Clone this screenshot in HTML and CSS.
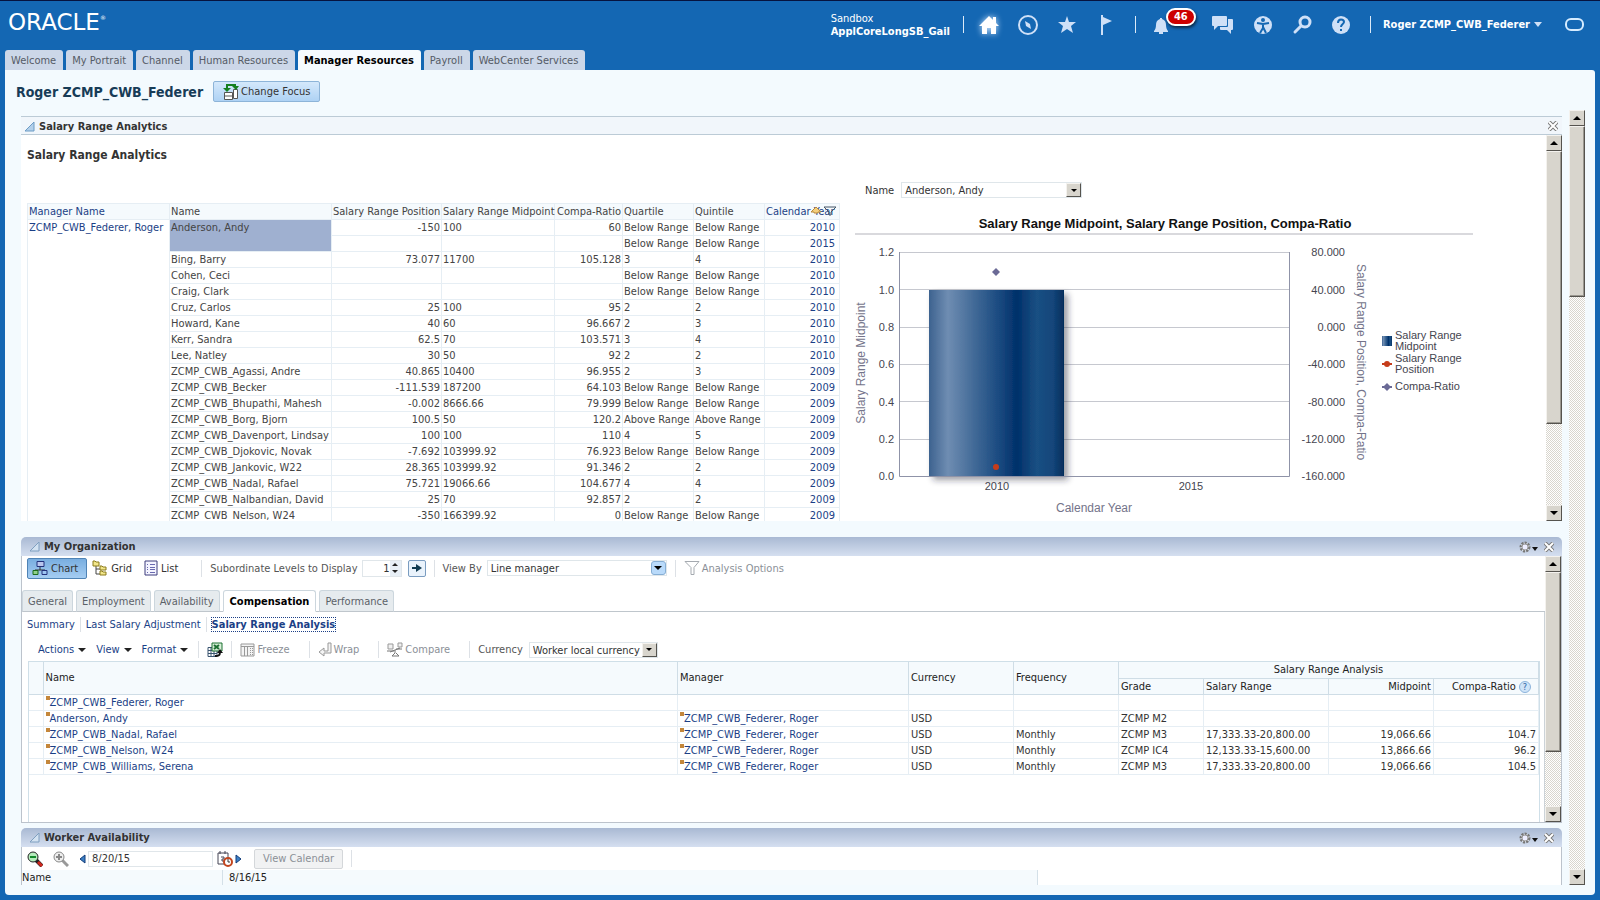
FILE: index.html
```html
<!DOCTYPE html>
<html lang="en">
<head>
    <meta charset="UTF-8">
    <meta name="viewport" content="width=device-width, initial-scale=1.0">
    <title>Manager Resources</title>
    <link rel="stylesheet" href="styles.css">
</head>
<body>
    <header class="top-bar">
        <a class="logo" href="#">ORACLE<sup>&reg;</sup></a>
        <div class="sandbox">Sandbox<br><strong>ApplCoreLongSB_Gail</strong></div>
        <nav class="global-icons" aria-label="Global">
            <span class="rule"></span>
            <a class="home" href="#" aria-label="Home"><svg width="20" height="20" viewBox="0 0 20 20"><path fill="#fff" d="M10 1 0 11h3v8h5v-6h4v6h5v-8h3l-3-3V2h-3v3z"/></svg></a>
            <a href="#" aria-label="Navigator"><svg width="20" height="20" viewBox="0 0 20 20"><circle cx="10" cy="10" r="9" fill="none" stroke="#cfe0f7" stroke-width="2"/><path fill="#cfe0f7" d="M7 6l5 3 1 5-5-3z"/></svg></a>
            <a href="#" aria-label="Favorites"><svg width="20" height="20" viewBox="0 0 20 20"><path fill="#cfe0f7" d="M10 1l2 6h7l-5 4 2 7-6-4-6 4 2-7-5-4h7z"/></svg></a>
            <a href="#" aria-label="Watchlist"><svg width="20" height="20" viewBox="0 0 20 20"><path fill="#cfe0f7" d="M5 0h2v2l9 4-9 4v10H5z"/></svg></a>
            <span class="rule"></span>
            <a class="bell" href="#" aria-label="Notifications"><svg width="20" height="20" viewBox="0 0 20 20"><path fill="#cfe0f7" d="M9 3h2v1c3 1 4 3 4 6 0 3 1 5 2 6v1h-5v2H8v-2H3v-1c1-1 2-3 2-6 0-3 1-5 4-6z"/></svg><span class="badge">46</span></a>
            <a href="#" aria-label="Conversations"><svg width="22" height="20" viewBox="0 0 22 20"><path fill="#cfe0f7" d="M1 1h13a1 1 0 0 1 1 1v8a1 1 0 0 1-1 1H6l-4 4v-4H1a1 1 0 0 1-1-1V2a1 1 0 0 1 1-1zM16 4h4a1 1 0 0 1 1 1v9a1 1 0 0 1-1 1h-1v4l-4-4H9a1 1 0 0 1-1-1v-2h7a1 1 0 0 0 1-1z"/></svg></a>
            <a href="#" aria-label="Accessibility"><svg width="20" height="20" viewBox="0 0 20 20"><circle cx="10" cy="10" r="9" fill="#cfe0f7"/><circle cx="10" cy="5" r="2" fill="#1467b3"/><path fill="none" stroke="#1467b3" stroke-width="2" d="M4 8l6 1 6-1M10 8v5l-3 5M10 12l3 6"/></svg></a>
            <a href="#" aria-label="Search"><svg width="20" height="20" viewBox="0 0 20 20"><circle cx="13" cy="7" r="5" fill="none" stroke="#cfe0f7" stroke-width="3"/><path stroke="#cfe0f7" stroke-width="3" stroke-linecap="round" d="M9 11l-6 6"/></svg></a>
            <a href="#" aria-label="Help"><svg width="20" height="20" viewBox="0 0 20 20"><circle cx="10" cy="10" r="9" fill="#cfe0f7"/><path fill="none" stroke="#1467b3" stroke-width="2" d="M7 8c0-5 6-4 6-1 0 2-3 2-3 5M10 14v2"/></svg></a>
            <span class="rule"></span>
        </nav>
        <button class="user-menu" type="button">Roger ZCMP_CWB_Federer <i class="caret"></i></button>
        <svg class="o-mark" width="20" height="14" viewBox="0 0 20 14"><rect x="1" y="1" width="17" height="11" rx="5" fill="none" stroke="#d6ecff" stroke-width="2"/></svg>
    </header>

    <nav class="main-tabs">
        <a href="#">Welcome</a>
        <a href="#">My Portrait</a>
        <a href="#">Channel</a>
        <a href="#">Human Resources</a>
        <a href="#" class="active">Manager Resources</a>
        <a href="#">Payroll</a>
        <a href="#">WebCenter Services</a>
    </nav>

    <main class="page">
        <div class="page-title">
            <h1>Roger ZCMP_CWB_Federer</h1>
            <button class="focus-button" type="button">
                <svg width="16" height="18" viewBox="0 0 16 18"><path fill="#fff" stroke="#555" d="M10.500 6.500h4v9h-4zM1.500 9.500h8v7h-8z"/><path stroke="#555" d="M2 13h8"/><path fill="none" stroke="#15801f" stroke-width="2" d="M4 6V2h8v2"/><path fill="#15801f" d="M0 5h8L4 9zM9 3h7l-3 4z"/></svg>
                Change Focus
            </button>
        </div>

        <div class="scroller">
            <div class="portlets">

                <section class="portlet analytics">
                    <div class="portlet-head light">
                        <svg width="11" height="11" viewBox="0 0 11 11"><path fill="#b4d0ea" stroke="#6d9cc6" d="M1 10h9V1z"/></svg>
                        <h2>Salary Range Analytics</h2>
                        <button class="close" type="button" aria-label="Close"><svg width="10" height="10" viewBox="0 0 10 10"><path stroke="#777" stroke-width="4" d="M1 1l8 8M9 1L1 9"/><path stroke="#fff" stroke-width="2" d="M1 1l8 8M9 1L1 9"/></svg></button>
                    </div>
                    <div class="portlet-body">
                        <div class="analytics-view">
                            <h3>Salary Range Analytics</h3>
                            <div class="analytics-columns">
                                <table class="salary-table">
                                    <colgroup>
                                        <col class="c-manager"><col class="c-name"><col class="c-position"><col class="c-midpoint"><col class="c-compa"><col class="c-tile"><col class="c-tile"><col class="c-year">
                                    </colgroup>
                                    <thead>
                                        <tr>
                                            <th class="link">Manager Name</th><th>Name</th><th class="num">Salary Range Position</th><th>Salary Range Midpoint</th><th class="num">Compa-Ratio</th><th>Quartile</th><th>Quintile</th>
                                            <th class="link year-head">Calendar Year<svg width="28" height="10" viewBox="0 0 28 10"><path fill="#f5cf7d" stroke="#b98b3c" d="M1 6l5-5 5 5H8v1H4V6z"/><path fill="none" stroke="#456" d="M14 1h12l-5 5v3h-2V6z"/></svg></th>
                                        </tr>
                                    </thead>
                                    <tbody>
                                        <tr><td class="link" rowspan="19">ZCMP_CWB_Federer, Roger</td><td class="selected" rowspan="2">Anderson, Andy</td><td class="num">-150</td><td>100</td><td class="num">60</td><td>Below Range</td><td>Below Range</td><td class="year">2010</td></tr>
                                        <tr><td></td><td></td><td></td><td>Below Range</td><td>Below Range</td><td class="year">2015</td></tr>
                                        <tr><td>Bing, Barry</td><td class="num">73.077</td><td>11700</td><td class="num">105.128</td><td>3</td><td>4</td><td class="year">2010</td></tr>
                                        <tr><td>Cohen, Ceci</td><td></td><td></td><td></td><td>Below Range</td><td>Below Range</td><td class="year">2010</td></tr>
                                        <tr><td>Craig, Clark</td><td></td><td></td><td></td><td>Below Range</td><td>Below Range</td><td class="year">2010</td></tr>
                                        <tr><td>Cruz, Carlos</td><td class="num">25</td><td>100</td><td class="num">95</td><td>2</td><td>2</td><td class="year">2010</td></tr>
                                        <tr><td>Howard, Kane</td><td class="num">40</td><td>60</td><td class="num">96.667</td><td>2</td><td>3</td><td class="year">2010</td></tr>
                                        <tr><td>Kerr, Sandra</td><td class="num">62.5</td><td>70</td><td class="num">103.571</td><td>3</td><td>4</td><td class="year">2010</td></tr>
                                        <tr><td>Lee, Natley</td><td class="num">30</td><td>50</td><td class="num">92</td><td>2</td><td>2</td><td class="year">2010</td></tr>
                                        <tr><td>ZCMP_CWB_Agassi, Andre</td><td class="num">40.865</td><td>10400</td><td class="num">96.955</td><td>2</td><td>3</td><td class="year">2009</td></tr>
                                        <tr><td>ZCMP_CWB_Becker</td><td class="num">-111.539</td><td>187200</td><td class="num">64.103</td><td>Below Range</td><td>Below Range</td><td class="year">2009</td></tr>
                                        <tr><td>ZCMP_CWB_Bhupathi, Mahesh</td><td class="num">-0.002</td><td>8666.66</td><td class="num">79.999</td><td>Below Range</td><td>Below Range</td><td class="year">2009</td></tr>
                                        <tr><td>ZCMP_CWB_Borg, Bjorn</td><td class="num">100.5</td><td>50</td><td class="num">120.2</td><td>Above Range</td><td>Above Range</td><td class="year">2009</td></tr>
                                        <tr><td>ZCMP_CWB_Davenport, Lindsay</td><td class="num">100</td><td>100</td><td class="num">110</td><td>4</td><td>5</td><td class="year">2009</td></tr>
                                        <tr><td>ZCMP_CWB_Djokovic, Novak</td><td class="num">-7.692</td><td>103999.92</td><td class="num">76.923</td><td>Below Range</td><td>Below Range</td><td class="year">2009</td></tr>
                                        <tr><td>ZCMP_CWB_Jankovic, W22</td><td class="num">28.365</td><td>103999.92</td><td class="num">91.346</td><td>2</td><td>2</td><td class="year">2009</td></tr>
                                        <tr><td>ZCMP_CWB_Nadal, Rafael</td><td class="num">75.721</td><td>19066.66</td><td class="num">104.677</td><td>4</td><td>4</td><td class="year">2009</td></tr>
                                        <tr><td>ZCMP_CWB_Nalbandian, David</td><td class="num">25</td><td>70</td><td class="num">92.857</td><td>2</td><td>2</td><td class="year">2009</td></tr>
                                        <tr><td>ZCMP_CWB_Nelson, W24</td><td class="num">-350</td><td>166399.92</td><td class="num">0</td><td>Below Range</td><td>Below Range</td><td class="year">2009</td></tr>
                                    </tbody>
                                </table>
                                <div class="chart-panel">
                                    <div class="chart-filter">
                                        <label for="worker">Name</label>
                                        <span class="select-box worker-select"><select id="worker"><option>Anderson, Andy</option></select><i class="drop"></i></span>
                                    </div>
                                    <svg class="chart" width="620" height="306" viewBox="0 0 620 306">
                                        <defs>
                                            <linearGradient id="bar"><stop offset="0" stop-color="#3d628f"/><stop offset=".14" stop-color="#6f8db2"/><stop offset=".35" stop-color="#3e6795"/><stop offset=".52" stop-color="#1a4a80"/><stop offset=".65" stop-color="#00306a"/><stop offset=".8" stop-color="#1a5083"/><stop offset=".92" stop-color="#13457a"/><stop offset="1" stop-color="#052e5b"/></linearGradient>
                                            <filter id="shade" x="-10%" y="-10%" width="130%" height="120%"><feDropShadow dx="4" dy="4" stdDeviation="3" flood-color="#223" flood-opacity=".45"/></filter>
                                        </defs>
                                        <text class="chart-title" x="310" y="20" text-anchor="middle">Salary Range Midpoint, Salary Range Position, Compa-Ratio</text>
                                        <path stroke="#d9d9dd" stroke-width="2" d="M0 26h618"/>
                                        <path stroke="#c6c8cf" d="M45 44.500h390M45 81.500h390M45 119.500h390M45 156.500h390M45 193.500h390M45 231.500h390"/>
                                        <rect x="74" y="82" width="135" height="186" fill="url(#bar)" filter="url(#shade)"/>
                                        <path fill="none" stroke="#8f93a8" d="M44.500 44v224.500h390V44"/>
                                        <path fill="#6b6a96" d="M141 60l4 4-4 4-4-4z"/>
                                        <circle cx="141" cy="259" r="3" fill="#c63c1a"/>
                                        <g class="axis-labels" text-anchor="end">
                                            <text x="39" y="48">1.2</text><text x="39" y="86">1.0</text><text x="39" y="123">0.8</text><text x="39" y="160">0.6</text><text x="39" y="198">0.4</text><text x="39" y="235">0.2</text><text x="39" y="272">0.0</text>
                                            <text x="490" y="48">80.000</text><text x="490" y="86">40.000</text><text x="490" y="123">0.000</text><text x="490" y="160">-40.000</text><text x="490" y="198">-80.000</text><text x="490" y="235">-120.000</text><text x="490" y="272">-160.000</text>
                                        </g>
                                        <g class="axis-labels" text-anchor="middle">
                                            <text x="142" y="282">2010</text><text x="336" y="282">2015</text>
                                        </g>
                                        <g class="axis-titles" text-anchor="middle">
                                            <text x="239" y="304">Calendar Year</text>
                                            <text transform="translate(10 155) rotate(-90)">Salary Range Midpoint</text>
                                            <text transform="translate(502 154) rotate(90)">Salary Range Position, Compa-Ratio</text>
                                        </g>
                                        <g class="legend">
                                            <rect x="527" y="128" width="10" height="10" fill="url(#bar)"/>
                                            <text x="540" y="131">Salary Range</text><text x="540" y="142">Midpoint</text>
                                            <path stroke="#c63c1a" stroke-width="2" d="M527 156h10"/><circle cx="532" cy="156" r="3" fill="#c63c1a"/>
                                            <text x="540" y="154">Salary Range</text><text x="540" y="165">Position</text>
                                            <path stroke="#6b6a96" stroke-width="2" d="M527 179h10"/><path fill="#6b6a96" d="M532 175l4 4-4 4-4-4z"/>
                                            <text x="540" y="182">Compa-Ratio</text>
                                        </g>
                                    </svg>
                                </div>
                            </div>
                        </div>
                        <div class="scrollbar">
                            <button class="up" type="button" aria-label="Scroll up"></button>
                            <div class="track"><div class="thumb"></div></div>
                            <button class="down" type="button" aria-label="Scroll down"></button>
                        </div>
                    </div>
                </section>

                <section class="portlet organization">
                    <div class="portlet-head">
                        <svg width="11" height="11" viewBox="0 0 11 11"><path fill="#d3e2f1" stroke="#7f9fc0" d="M1 10h9V1z"/></svg>
                        <h2>My Organization</h2>
                        <button class="gear" type="button" aria-label="Options"><svg width="20" height="12" viewBox="0 0 20 12"><circle cx="6" cy="6" r="4" fill="#fff" stroke="#777" stroke-width="3" stroke-dasharray="2 1"/><circle cx="6" cy="6" r="3" fill="#eef" stroke="#999"/><path fill="#111" d="M13 6h6l-3 4z"/></svg></button>
                        <button class="close" type="button" aria-label="Close"><svg width="10" height="10" viewBox="0 0 10 10"><path stroke="#777" stroke-width="4" d="M1 1l8 8M9 1L1 9"/><path stroke="#fff" stroke-width="2" d="M1 1l8 8M9 1L1 9"/></svg></button>
                    </div>
                    <div class="portlet-body framed">
                        <div class="org-view">
                            <div class="toolbar">
                                <button class="view-button pressed" type="button">
                                    <svg width="16" height="16" viewBox="0 0 16 16"><path fill="none" stroke="#333" d="M8 7v3M3 13v-3h10v3"/><path fill="#b9c6ee" stroke="#23327c" d="M5 1.500h7v5H5z"/><path fill="#8fd08a" stroke="#1c6b1c" d="M1 10.500h5v4H1z"/><path fill="#9ec6f2" stroke="#23327c" d="M10 10.500h5v4h-5z"/></svg>
                                    Chart</button>
                                <button class="view-button" type="button">
                                    <svg width="16" height="16" viewBox="0 0 16 16"><path fill="none" stroke="#444" d="M4 6v8h4M4 9h4"/><path fill="#f2e68a" stroke="#8a7a1c" d="M1 1h2l1 1h3v4H1zM8 6h2l1 1h3v3H8zM8 11h2l1 1h3v3H8z"/></svg>
                                    Grid</button>
                                <button class="view-button" type="button">
                                    <svg width="14" height="16" viewBox="0 0 14 16"><path fill="#f4f4ff" stroke="#3c3c7c" d="M1 1h12v14H1z"/><path stroke="#6a6ab0" d="M3 4.500h1M6 4.500h5M3 7.500h1M6 7.500h5M3 9.500h1M6 9.500h5M3 12.500h1M6 12.500h5"/></svg>
                                    List</button>
                                <span class="divider"></span>
                                <label for="levels">Subordinate Levels to Display</label>
                                <span class="spin"><input id="levels" type="text" value="1"><span class="spin-arrows"><i class="caret up"></i><i class="caret"></i></span></span>
                                <button class="go" type="button" aria-label="Go"><svg width="12" height="12" viewBox="0 0 12 12"><path fill="#123c52" d="M1 5h4V2l6 4-6 4V7H1z"/></svg></button>
                                <span class="divider"></span>
                                <label for="viewby">View By</label>
                                <span class="select-box view-select"><select id="viewby"><option>Line manager</option></select><i class="drop"></i></span>
                                <span class="divider"></span>
                                <button class="tool analysis" type="button" disabled>
                                    <svg width="16" height="16" viewBox="0 0 16 16"><path fill="#fff" stroke="#a5aab0" d="M1 1.500h14l-5 6v7H7v-7z"/></svg>
                                    Analysis Options</button>
                            </div>

                            <nav class="sub-tabs">
                                <a href="#">General</a>
                                <a href="#">Employment</a>
                                <a href="#">Availability</a>
                                <a href="#" class="active">Compensation</a>
                                <a href="#">Performance</a>
                            </nav>

                            <div class="tab-panel">
                                <nav class="sub-links">
                                    <a href="#">Summary</a>
                                    <a href="#">Last Salary Adjustment</a>
                                    <a href="#" class="active"><span>Salary Range Analysis</span></a>
                                </nav>
                                <div class="toolbar table-tools">
                                    <button class="menu" type="button">Actions <i class="caret"></i></button>
                                    <button class="menu" type="button">View <i class="caret"></i></button>
                                    <button class="menu" type="button">Format <i class="caret"></i></button>
                                    <span class="divider"></span>
                                    <button class="tool" type="button" aria-label="Export to Excel"><svg width="16" height="16" viewBox="0 0 16 16"><path fill="#fff" stroke="#3a5570" d="M1 5.500h9v9H1zM1 8.500h9M1 11.500h9M4 5v9M7 5v9"/><path fill="#d8f0d8" stroke="#1d7032" d="M5 1h10v8H5z"/><path stroke="#1d7032" stroke-width="2" d="M7 3l5 4M12 3L7 7"/><path fill="none" stroke="#111" stroke-width="2" d="M8 14c3 0 5 0 5-4"/><path fill="#111" d="M10 11h6l-3-4z"/></svg></button>
                                    <span class="divider"></span>
                                    <button class="tool" type="button" disabled><svg width="15" height="14" viewBox="0 0 15 14"><path fill="#f4f4f4" stroke="#999" d="M1 1h13v12H1z"/><path stroke="#999" d="M1 3.500h13M4.500 3v10M7.500 3v10"/><path stroke="#999" stroke-dasharray="1 1" d="M10.500 3v10M12.500 3v10"/></svg> Freeze</button>
                                    <span class="divider"></span>
                                    <button class="tool" type="button" disabled><svg width="14" height="15" viewBox="0 0 14 15"><path fill="#f4f4f4" stroke="#999" d="M10 1h3v10H6v3l-5-4 5-4v3h4z"/></svg> Wrap</button>
                                    <span class="divider"></span>
                                    <button class="tool" type="button" disabled><svg width="16" height="15" viewBox="0 0 16 15"><path fill="#f0f0f0" stroke="#999" d="M1 2h5v5H1zM11 1h4v4h-4z"/><path fill="none" stroke="#777" d="M0 9h7M9 7h6M3 10l10-4M8 8v3l-3 3h7l-3-3"/></svg> Compare</button>
                                    <span class="divider"></span>
                                    <label for="currency">Currency</label>
                                    <span class="select-box currency-select"><select id="currency"><option>Worker local currency</option></select><i class="drop"></i></span>
                                </div>

                                <div class="table-frame">
                                    <table class="comp-table">
                                        <colgroup>
                                            <col class="k-mark"><col><col class="k-manager"><col class="k-mid"><col class="k-mid"><col class="k-grade"><col class="k-range"><col class="k-mid"><col class="k-mid">
                                        </colgroup>
                                        <thead>
                                            <tr><th rowspan="2"></th><th rowspan="2">Name</th><th rowspan="2">Manager</th><th rowspan="2">Currency</th><th rowspan="2">Frequency</th><th colspan="4" class="group">Salary Range Analysis</th></tr>
                                            <tr><th>Grade</th><th>Salary Range</th><th class="num">Midpoint</th><th class="num">Compa-Ratio <i class="hint">?</i></th></tr>
                                        </thead>
                                        <tbody>
                                            <tr><td></td><td><a class="person" href="#">ZCMP_CWB_Federer, Roger</a></td><td></td><td></td><td></td><td></td><td></td><td></td><td></td></tr>
                                            <tr><td></td><td><a class="person" href="#">Anderson, Andy</a></td><td><a class="person" href="#">ZCMP_CWB_Federer, Roger</a></td><td>USD</td><td></td><td>ZCMP M2</td><td></td><td></td><td></td></tr>
                                            <tr><td></td><td><a class="person" href="#">ZCMP_CWB_Nadal, Rafael</a></td><td><a class="person" href="#">ZCMP_CWB_Federer, Roger</a></td><td>USD</td><td>Monthly</td><td>ZCMP M3</td><td>17,333.33-20,800.00</td><td class="num">19,066.66</td><td class="num">104.7</td></tr>
                                            <tr><td></td><td><a class="person" href="#">ZCMP_CWB_Nelson, W24</a></td><td><a class="person" href="#">ZCMP_CWB_Federer, Roger</a></td><td>USD</td><td>Monthly</td><td>ZCMP IC4</td><td>12,133.33-15,600.00</td><td class="num">13,866.66</td><td class="num">96.2</td></tr>
                                            <tr><td></td><td><a class="person" href="#">ZCMP_CWB_Williams, Serena</a></td><td><a class="person" href="#">ZCMP_CWB_Federer, Roger</a></td><td>USD</td><td>Monthly</td><td>ZCMP M3</td><td>17,333.33-20,800.00</td><td class="num">19,066.66</td><td class="num">104.5</td></tr>
                                        </tbody>
                                    </table>
                                </div>
                            </div>
                        </div>
                        <div class="scrollbar">
                            <button class="up" type="button" aria-label="Scroll up"></button>
                            <div class="track"><div class="thumb"></div></div>
                            <button class="down" type="button" aria-label="Scroll down"></button>
                        </div>
                    </div>
                </section>

                <section class="portlet availability">
                    <div class="portlet-head">
                        <svg width="11" height="11" viewBox="0 0 11 11"><path fill="#d3e2f1" stroke="#7f9fc0" d="M1 10h9V1z"/></svg>
                        <h2>Worker Availability</h2>
                        <button class="gear" type="button" aria-label="Options"><svg width="20" height="12" viewBox="0 0 20 12"><circle cx="6" cy="6" r="4" fill="#fff" stroke="#777" stroke-width="3" stroke-dasharray="2 1"/><circle cx="6" cy="6" r="3" fill="#eef" stroke="#999"/><path fill="#111" d="M13 6h6l-3 4z"/></svg></button>
                        <button class="close" type="button" aria-label="Close"><svg width="10" height="10" viewBox="0 0 10 10"><path stroke="#777" stroke-width="4" d="M1 1l8 8M9 1L1 9"/><path stroke="#fff" stroke-width="2" d="M1 1l8 8M9 1L1 9"/></svg></button>
                    </div>
                    <div class="availability-view">
                        <div class="date-tools">
                            <button class="zoom" type="button" aria-label="Zoom out"><svg width="16" height="16" viewBox="0 0 16 16"><path stroke="#222" stroke-width="4" d="M9 9l6 6"/><path stroke="#d2281e" stroke-width="3" d="M11 11l4 4"/><circle cx="6" cy="6" r="5" fill="#b5ecbc" stroke="#222"/><path stroke="#128a2a" stroke-width="2" d="M3 6h6"/></svg></button>
                            <button class="zoom" type="button" aria-label="Zoom in"><svg width="16" height="16" viewBox="0 0 16 16"><path stroke="#999" stroke-width="3" d="M9 9l6 6"/><circle cx="6" cy="6" r="5" fill="#eee" stroke="#888"/><path stroke="#888" stroke-width="2" d="M3 6h6M6 3v6"/></svg></button>
                            <button class="step" type="button" aria-label="Previous"><svg width="7" height="10" viewBox="0 0 7 10"><path fill="#3b7fc4" stroke="#123c7a" d="M6 1v8L1 5z"/></svg></button>
                            <input class="date" type="text" value="8/20/15" aria-label="Date">
                            <button class="zoom" type="button" aria-label="Pick a date"><svg width="16" height="16" viewBox="0 0 16 16"><path fill="#fff" stroke="#445" d="M1 2h10v11H1zM3 0v3M8 0v3"/><path fill="none" stroke="#445" d="M4 6h3v2H5v2h2"/><circle cx="11" cy="11" r="4" fill="#fff" stroke="#c2451e" stroke-width="2"/><path fill="none" stroke="#333" d="M11 8v3h2"/></svg></button>
                            <button class="step" type="button" aria-label="Next"><svg width="7" height="10" viewBox="0 0 7 10"><path fill="#3b7fc4" stroke="#123c7a" d="M1 1v8l5-4z"/></svg></button>
                            <button class="calendar-button" type="button" disabled>View Calendar</button>
                            <span class="divider"></span>
                        </div>
                        <div class="gantt-head">
                            <span class="gantt-name">Name</span>
                            <span class="gantt-date">8/16/15</span>
                        </div>
                    </div>
                </section>
            </div>

            <div class="scrollbar page-scroll">
                <button class="up" type="button" aria-label="Scroll up"></button>
                <div class="track"><div class="thumb"></div></div>
                <button class="down" type="button" aria-label="Scroll down"></button>
            </div>
        </div>
    </main>
</body>
</html>
```

FILE: styles.css
```css
* {
    box-sizing: border-box;
}
body {
    display: flex;
    flex-direction: column;
    height: 100vh;
    margin: 0;
    padding: 0 5px 5px;
    overflow: hidden;
    border-top: 1px solid #06133f;
    background-color: #1467b3;
    color: #333;
    font-family: "DejaVu Sans Condensed", Tahoma, sans-serif;
    font-size: 11px;
    line-height: 15px;
}
h1, h2, h3 {
    margin: 0;
}
a {
    color: #1b3f86;
    text-decoration: none;
}
button, input, select {
    margin: 0;
    padding: 0;
    border: none;
    background: none;
    color: inherit;
    font: inherit;
}
button {
    display: inline-flex;
    align-items: center;
    white-space: nowrap;
}
svg {
    display: block;
    flex: none;
}

/* Top bar */
.top-bar {
    display: flex;
    align-items: center;
    height: 49px;
    padding: 0 10px 2px 3px;
    color: #fff;
}
.logo {
    margin-right: auto;
    padding-bottom: 5px;
    color: #fff;
    font-family: "DejaVu Sans", sans-serif;
    font-size: 23px;
    line-height: 24px;
}
.logo sup {
    font-size: 6px;
    vertical-align: 10px;
    line-height: 0;
}
.sandbox {
    line-height: 13px;
}
.global-icons {
    display: flex;
    align-items: center;
    gap: 19px;
    margin: 0 12px 0 13px;
}
.global-icons .rule {
    width: 1px;
    height: 17px;
    background-color: #dceaf8;
}
.rule + a {
    margin-left: -4px;
}
.home {
    filter: drop-shadow(0 0 3px #cfe6ff);
}
.bell {
    position: relative;
    margin-right: 22px;
}
.badge {
    position: absolute;
    top: -7px;
    left: 15px;
    padding: 0 6px;
    border: 2px solid #fff;
    border-radius: 9px;
    background-color: #cc0000;
    box-shadow: 1px 2px 3px rgba(0, 0, 0, 0.6);
    color: #fff;
    font-weight: bold;
    line-height: 14px;
}
.user-menu {
    gap: 4px;
    font-weight: bold;
}
.o-mark {
    margin-left: 23px;
}
.caret {
    display: inline-block;
    border: 4px solid transparent;
    border-top-color: #222;
    border-bottom: none;
}
.caret.up {
    border-top: none;
    border-bottom: 4px solid #222;
}
.user-menu .caret {
    border-top-color: #cfe0f7;
    border-top-width: 5px;
}

/* Main tabs */
.main-tabs {
    display: flex;
    gap: 3px;
}
.main-tabs a {
    padding: 3px 7px 2px 6px;
    border-radius: 3px 3px 0 0;
    background-color: #ccd7e8;
    color: #555b66;
}
.main-tabs .active {
    background-color: #f6fbfe;
    color: #000;
    font-weight: bold;
}

/* Page */
.page {
    display: flex;
    flex-direction: column;
    flex: 1;
    min-height: 0;
    padding-bottom: 10px;
    border-radius: 0 3px 4px 4px;
    background-color: #f3fafe;
}
.page-title {
    display: flex;
    align-items: center;
    gap: 10px;
    height: 40px;
    padding: 3px 0 0 11px;
}
.page-title h1 {
    color: #173c57;
    font-size: 14px;
    line-height: 20px;
}
.focus-button {
    gap: 2px;
    height: 21px;
    padding: 0 9px;
    border: 1px solid #8db4d8;
    border-radius: 2px;
    background: linear-gradient(#d4e8fb, #aed2f4);
}
.scroller {
    display: flex;
    flex: 1;
    gap: 7px;
    min-height: 0;
    padding: 0 10px 0 16px;
}
.portlets {
    display: grid;
    flex: 1;
    grid-template-rows: 45vh 1fr 62px;
    min-width: 0;
    padding-top: 6px;
}
.portlet {
    display: flex;
    flex-direction: column;
    min-height: 0;
    overflow: hidden;
}
.portlet-head {
    display: flex;
    align-items: center;
    flex: none;
    height: 19px;
    padding: 0 8px;
    border-radius: 5px 5px 0 0;
    background: linear-gradient(#a9b9d3, #d5dff0);
}
.portlet-head.light {
    padding: 1px 4px 0 3px;
    border: solid #bccbd6;
    border-width: 1px 0;
    border-radius: 0;
    background: #f1f6fb;
}
.portlet-head h2 {
    margin: 0 auto 0 4px;
    font-size: 11px;
}
.gear {
    margin-right: 5px;
}
.portlet-body {
    display: flex;
    flex: 1;
    min-height: 0;
    background-color: #fff;
}
.portlet-body.framed {
    border: solid #bcc3cc;
    border-width: 0 1px 1px;
}

/* Scrollbars */
.scrollbar {
    display: flex;
    flex: none;
    flex-direction: column;
    width: 16px;
    background: repeating-conic-gradient(#d9d6ce 0 25%, #fff 0 50%) 0 0 / 2px 2px;
}
.scrollbar button {
    flex: none;
    justify-content: center;
    height: 16px;
    border: 1px solid;
    border-color: #f4f2ee #55534e #55534e #f4f2ee;
    background-color: #d8d5cd;
}
.scrollbar button::before {
    content: "";
    border: 4px solid transparent;
    border-top: none;
    border-bottom-color: #000;
}
.scrollbar .down::before {
    border-top: 4px solid #000;
    border-bottom: none;
}
.track {
    flex: 1;
}
.thumb {
    height: 77%;
    border: 1px solid;
    border-color: #f4f2ee #55534e #55534e #f4f2ee;
    background-color: #d8d5cd;
    box-shadow: inset -1px -1px #9b9890;
}
.page-scroll .thumb {
    height: 23%;
}

/* Salary range analytics */
.analytics-view {
    flex: 1;
    min-width: 0;
    overflow: hidden;
    padding: 12px 0 0 6px;
}
.analytics-view h3 {
    font-size: 12px;
    line-height: 16px;
}
.analytics-columns {
    display: flex;
    align-items: flex-start;
    gap: 15px;
    padding-top: 19px;
}
table {
    border-collapse: collapse;
    table-layout: fixed;
}
th, td {
    height: 16px;
    padding: 0 2px;
    border: 1px solid #e6eef4;
    font-weight: normal;
    line-height: 15px;
    text-align: left;
    vertical-align: top;
    white-space: nowrap;
}
th {
    background-color: #f5fafd;
}
.num {
    text-align: right;
}
.salary-table {
    flex: none;
    width: 812px;
    margin-top: 21px;
}
.salary-table th, .salary-table td {
    padding: 0 1px;
    color: #444;
}
.salary-table .link, .salary-table .year {
    color: #1b3f86;
}
.salary-table .selected {
    background-color: #9fb0d0;
}
.salary-table .year {
    padding-right: 4px;
    text-align: right;
}
.year-head {
    position: relative;
}
.year-head svg {
    position: absolute;
    top: 2px;
    right: 1px;
}
.c-manager { width: 142px; }
.c-name { width: 162px; }
.c-position { width: 110px; }
.c-midpoint { width: 113px; }
.c-compa { width: 68px; }
.c-tile { width: 71px; }
.c-year { width: 75px; }
.chart-panel {
    flex: none;
}
.chart-filter {
    display: flex;
    align-items: center;
    gap: 7px;
    padding-left: 10px;
}
.chart {
    margin-top: 10px;
    font-family: "Liberation Sans", Arial, sans-serif;
}
.chart-title {
    fill: #111;
    font-size: 13px;
    font-weight: bold;
}
.axis-labels, .legend {
    fill: #45454f;
    font-size: 11px;
}
.axis-titles {
    fill: #74748a;
    font-size: 12px;
}
.select-box {
    display: flex;
    height: 16px;
    border: 1px solid #dfe6ea;
    background-color: #fff;
}
.select-box select {
    flex: 1;
    min-width: 0;
    padding-left: 3px;
    appearance: none;
}
.drop {
    display: flex;
    align-items: center;
    justify-content: center;
    width: 15px;
    border: 1px solid;
    border-color: #f4f2ee #55534e #55534e #f4f2ee;
    background-color: #d8d5cd;
    pointer-events: none;
}
.drop::before {
    content: "";
    border: 3px solid transparent;
    border-top-color: #000;
    border-bottom: none;
}
.worker-select { width: 181px; }
.view-select { width: 180px; }
.currency-select { width: 129px; }
.view-select .drop {
    border-color: #86aed4;
    border-radius: 3px;
    background-color: #b9dafa;
}
.view-select .drop::before {
    border-width: 4px 4px 0;
}

/* My organization */
.organization {
    margin-top: 16px;
}
.org-view {
    display: flex;
    flex: 1;
    flex-direction: column;
    min-width: 0;
}
.toolbar, .date-tools {
    display: flex;
    align-items: center;
    white-space: nowrap;
}
.org-view > .toolbar {
    height: 24px;
    padding-left: 5px;
}
.toolbar label {
    color: #555;
}
.view-button {
    gap: 3px;
    height: 21px;
    padding: 0 6px 0 4px;
    border: 1px solid transparent;
    border-radius: 2px;
}
.view-button.pressed {
    padding-right: 8px;
    border-color: #4f83b5;
    background: linear-gradient(#79aee0, #a5cdf2);
}
.divider {
    width: 1px;
    height: 17px;
    margin: 0 8px;
    background-color: #dde1e6;
}
.view-button + .divider {
    margin-left: 16px;
}
.spin {
    display: flex;
    height: 17px;
    margin: 0 6px 0 4px;
    border: 1px solid #e0e6ea;
}
.spin input {
    width: 27px;
    text-align: right;
}
.spin-arrows {
    display: flex;
    flex-direction: column;
    align-items: center;
    justify-content: space-around;
    width: 11px;
    background-color: #e8eff6;
}
.spin-arrows .caret {
    border-width: 3px 3px 0;
}
.spin-arrows .caret.up {
    border-width: 0 3px 3px;
}
.go {
    justify-content: center;
    width: 18px;
    height: 17px;
    border: 1px solid #7a9cc0;
    border-radius: 2px;
    background-color: #eaf3fc;
}
.view-select {
    margin-left: 5px;
}
.tool {
    gap: 2px;
    color: #8b9097;
}
.sub-tabs {
    display: flex;
    gap: 3px;
    margin-top: 10px;
    border-bottom: 1px solid #bfc6cc;
}
.sub-tabs a {
    margin-bottom: -1px;
    padding: 3px 5px 2px;
    border: 1px solid #ccd6dd;
    border-bottom-color: #bfc6cc;
    border-radius: 3px 3px 0 0;
    background-color: #e6ebee;
    color: #5b6168;
}
.sub-tabs .active {
    padding: 3px 6px 2px;
    border-bottom-color: #fff;
    background-color: #fff;
    color: #000;
    font-weight: bold;
}
.tab-panel {
    display: flex;
    flex: 1;
    flex-direction: column;
    border-right: 1px solid #ccd3d8;
}
.sub-links {
    display: flex;
    padding: 5px 0 6px 5px;
}
.sub-links a + a {
    margin-left: 5px;
    padding-left: 5px;
    border-left: 1px solid #dde1e6;
}
.sub-links .active {
    font-weight: bold;
}
.active span {
    outline: 1px dotted #1b3f86;
}
.table-tools {
    height: 23px;
    padding-left: 16px;
}
.table-tools .tool:disabled {
    padding-right: 11px;
}
.menu {
    gap: 4px;
    margin-right: 10px;
    color: #1b3f86;
}
.menu + .divider {
    margin-left: 0;
}
.currency-select {
    margin-left: 6px;
}
.table-frame {
    flex: 1;
    margin: 0 4px 0 6px;
    border: solid #cfdfe8;
    border-width: 1px 1px 0;
}
.comp-table {
    width: 100%;
}
.comp-table th {
    border-color: #cfdde6;
    color: #222;
    vertical-align: middle;
}
.comp-table tr > :first-child {
    border-left: none;
}
.comp-table thead tr:first-child th {
    border-top: none;
}
.comp-table .group {
    text-align: center;
}
.k-mark { width: 14px; }
.k-manager { width: 231px; }
.k-mid { width: 105px; }
.k-grade { width: 85px; }
.k-range { width: 125px; }
.person::before {
    content: "";
    display: inline-block;
    width: 4px;
    height: 4px;
    background-color: #c4873a;
    vertical-align: 6px;
}
.hint {
    display: inline-block;
    width: 12px;
    margin-right: 5px;
    border: 1px solid #8db4dc;
    border-radius: 6px;
    background-color: #cfe4f8;
    color: #2d62a3;
    font-size: 9px;
    font-style: normal;
    line-height: 10px;
    text-align: center;
}

/* Worker availability */
.availability {
    margin-top: 5px;
}
.availability-view {
    flex: 1;
    border: solid #bcc3cc;
    border-width: 0 1px;
    background-color: #fff;
}
.date-tools {
    height: 23px;
    padding-left: 5px;
}
.zoom {
    margin-right: 10px;
}
.step {
    margin-right: 2px;
}
.date {
    width: 125px;
    height: 16px;
    margin-right: 4px;
    padding-left: 3px;
    border: 1px solid #e0e6ea;
}
.date + .zoom {
    margin-right: 2px;
}
.calendar-button {
    height: 20px;
    margin-left: 10px;
    padding: 0 8px;
    border: 1px solid #d4d7da;
    border-radius: 2px;
    background-color: #f1f2f3;
    color: #8b9097;
}
.gantt-head {
    display: flex;
    align-items: flex-end;
    width: 66%;
    border-right: 1px solid #d4e0e8;
    background-color: #f5fafd;
    color: #222;
}
.gantt-name {
    width: 201px;
    border-right: 1px solid #d4e0e8;
}
.gantt-date {
    padding-left: 6px;
}
```
